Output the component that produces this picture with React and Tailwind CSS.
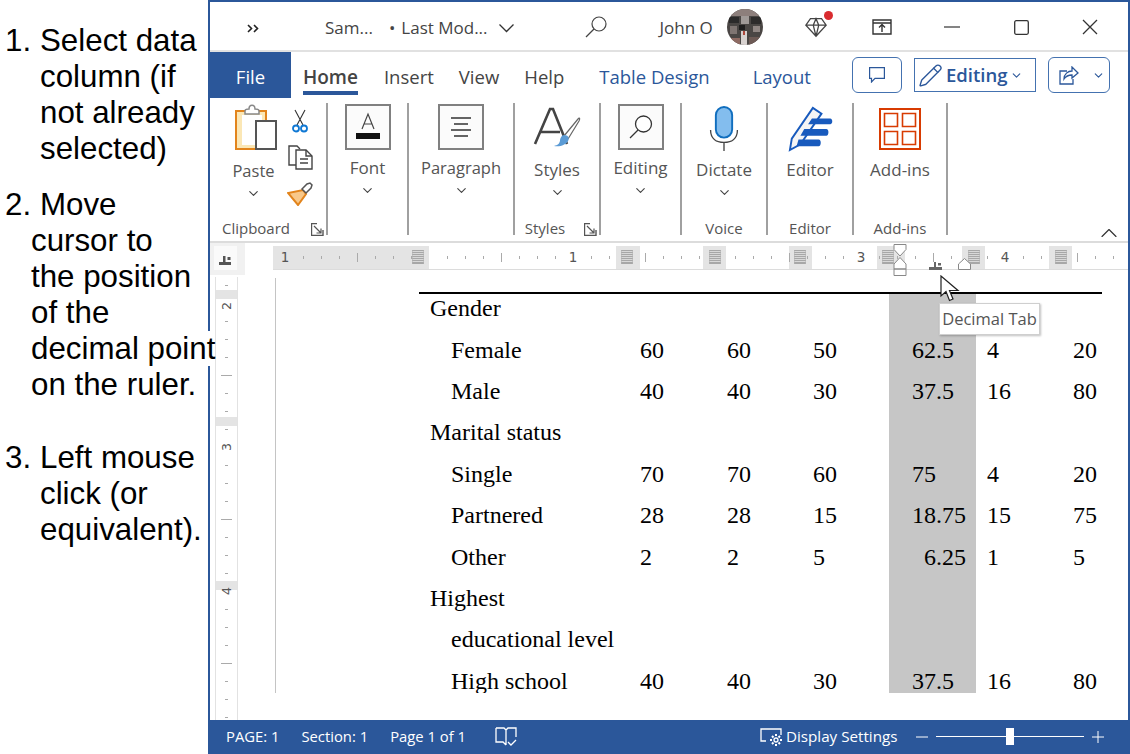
import { ChevronDown, ChevronUp, Pencil } from "lucide-react";

const steps = [
  { n: "1.", lines: ["Select data", "column (if", "not already", "selected)"] },
  { n: "2.", lines: ["Move", "cursor to", "the position", "of the", "decimal point", "on the ruler."] },
  { n: "3.", lines: ["Left mouse", "click (or", "equivalent)."] },
];

const rows = [
  { label: "Gender" },
  { label: "Female", sub: true, v: ["60", "60", "50", "62.5", "4", "20"] },
  { label: "Male", sub: true, v: ["40", "40", "30", "37.5", "16", "80"] },
  { label: "Marital status" },
  { label: "Single", sub: true, v: ["70", "70", "60", "75", "4", "20"] },
  { label: "Partnered", sub: true, v: ["28", "28", "15", "18.75", "15", "75"] },
  { label: "Other", sub: true, v: ["2", "2", "5", "6.25", "1", "5"] },
  { label: "Highest" },
  { label: "educational level", sub: true },
  { label: "High school", sub: true, v: ["40", "40", "30", "37.5", "16", "80"] },
];

function Instructions() {
  return (
    <aside className="relative z-10 w-[208px] shrink-0 pl-[5px] pt-[23px] font-['Liberation_Sans',sans-serif] text-[31.300px] leading-[36px] text-black">
      <div className="flex">
        <span className="w-[35px] shrink-0">1.</span>
        <div>{steps[0].lines.map((l) => <div key={l}>{l}</div>)}</div>
      </div>
      <div className="mt-[20px] flex">
        <span className="w-[26px] shrink-0">2.</span>
        <div className="whitespace-nowrap">
          {steps[1].lines.map((l, i) => (
            <div key={l} className={i === 0 ? "pl-[9px]" : ""}>
              <span className={i === 4 ? "bg-white" : ""}>{l}</span>
            </div>
          ))}
        </div>
      </div>
      <div className="mt-[37px] flex">
        <span className="w-[35px] shrink-0">3.</span>
        <div>{steps[2].lines.map((l) => <div key={l}>{l}</div>)}</div>
      </div>
    </aside>
  );
}

function TitleBar() {
  return (
    <div className="flex h-[50px] shrink-0 items-center border-b-2 border-[#e1e1e1] text-[17px] text-[#444]">
      <svg className="ml-[37px] mt-[4px]" width="12" height="9" viewBox="0 0 12 9" fill="none" stroke="#222" strokeWidth="1.6">
        <path d="M1 1l3.500 3.500L1 8M7 1l3.500 3.500L7 8" />
      </svg>
      <span className="ml-[66px] mt-[4px]">Sam...</span>
      <span className="ml-[16px] mt-[4px]">•</span>
      <span className="ml-[6px] mt-[4px]">Last Mod...</span>
      <svg className="ml-[11px] mt-[4px]" width="15" height="9" viewBox="0 0 15 9" fill="none" stroke="#333" strokeWidth="1.3">
        <path d="M.5.500l7 7 7-7" />
      </svg>
      <svg className="ml-[71px] mt-[2px]" width="22" height="22" viewBox="0 0 22 22" fill="none" stroke="#444" strokeWidth="1.200">
        <circle cx="14" cy="8" r="7" /><path d="M9 13l-8 8" />
      </svg>
      <span className="ml-[53px] mt-[4px]">John O</span>
      <Avatar />
      <div className="relative ml-[41px] mt-[2px]">
        <svg className="block" width="24" height="24" viewBox="0 0 26 24" fill="none" stroke="#444" strokeWidth="1.4">
          <path d="M7 3h12l5 7-11 12L2 10z M2 10h22 M10 10l3 12 3-12 M10 10l3-7 3 7" />
        </svg>
        <span className="absolute right-[-5px] top-[-4px] size-[9px] rounded-full bg-[#d92b2f]" />
      </div>
      <svg className="ml-[44px] mt-[2px]" width="20" height="16" viewBox="0 0 20 16" fill="none" stroke="#333" strokeWidth="1.4">
        <path d="M1 1h18v14H1z M1 4h18" /><path d="M10 13V6M7 8.500l3-3 3 3" />
      </svg>
      <svg className="ml-[52px] mt-[2px]" width="16" height="2" viewBox="0 0 16 2" stroke="#333" strokeWidth="1.2"><path d="M0 1h16" /></svg>
      <svg className="ml-[54px] mt-[2px]" width="15" height="15" viewBox="0 0 15 15" fill="none" stroke="#333" strokeWidth="1.300">
        <rect x=".7" y=".7" width="13.600" height="13.600" rx="1.500" />
      </svg>
      <svg className="ml-[53px] mt-[2px]" width="16" height="16" viewBox="0 0 16 16" fill="none" stroke="#333" strokeWidth="1.300">
        <path d="M1 1l14 14M15 1L1 15" />
      </svg>
    </div>
  );
}

function Avatar() {
  return (
    <svg className="ml-[14px] mt-[2px]" width="36" height="36" viewBox="0 0 36 36">
      <defs><clipPath id="av"><circle cx="18" cy="18" r="18" /></clipPath></defs>
      <g clipPath="url(#av)">
        <rect width="36" height="36" fill="#4a4644" />
        <rect y="0" width="36" height="7" fill="#8d7f7c" />
        <rect x="2" y="8" width="10" height="6" fill="#2b2a2a" />
        <rect x="14" y="7" width="8" height="8" fill="#a09a98" />
        <rect x="24" y="8" width="10" height="7" fill="#2d2b2b" />
        <rect x="3" y="17" width="7" height="8" fill="#7f7572" />
        <rect x="12" y="16" width="6" height="5" fill="#1f1e1e" />
        <rect x="26" y="17" width="7" height="6" fill="#908683" />
        <rect x="14" y="22" width="6" height="14" fill="#d8d2d0" />
        <rect x="16" y="22" width="2" height="4" fill="#b04a3e" />
        <rect x="0" y="29" width="13" height="7" fill="#8e6b63" />
        <rect x="22" y="28" width="14" height="8" fill="#6d5a55" />
      </g>
    </svg>
  );
}

function TabBar() {
  return (
    <div className="flex h-[46px] shrink-0 items-stretch text-[18.500px] text-[#444]">
      <div className="flex w-[81px] items-center justify-center bg-[#2b579a] pt-[3px] text-white">File</div>
      <div className="relative ml-[12px] flex items-center pt-[4px] text-[19px] font-semibold">
        Home
        <span className="absolute bottom-[3px] left-0 right-0 h-[4px] bg-[#2b579a]" />
      </div>
      <div className="ml-[26px] flex items-center pt-[3px]">Insert</div>
      <div className="ml-[25px] flex items-center pt-[3px]">View</div>
      <div className="ml-[25px] flex items-center pt-[3px]">Help</div>
      <div className="ml-[35px] flex items-center pt-[3px] text-[#2b579a]">Table Design</div>
      <div className="ml-[43px] flex items-center pt-[3px] text-[#2b579a]">Layout</div>
      <div className="ml-[41px] mt-[5px] flex h-[36px] w-[50px] items-center justify-center rounded-[6px] border border-[#4472b0]">
        <svg width="16" height="16" viewBox="0 0 16 16" fill="none" stroke="#2b579a" strokeWidth="1.200">
          <path d="M.6.600h14.800v10.800H6L2.500 15v-3.600H.6z" />
        </svg>
      </div>
      <div className="ml-[12px] mt-[6px] flex h-[34px] w-[122px] items-center border border-[#4472b0] pl-[3px] font-semibold text-[#2b579a]">
        <Pencil className="size-[25px]" strokeWidth={1.3} />
        <span className="ml-[3px]">Editing</span>
        <ChevronDown className="ml-[3px] size-[13px]" strokeWidth={2} />
      </div>
      <div className="ml-[12px] mt-[5px] flex h-[36px] w-[62px] items-center rounded-[6px] border border-[#4472b0] pl-[10px] text-[#2b579a]">
        <svg width="20" height="19" viewBox="0 0 20 19" fill="none" stroke="#2b579a" strokeWidth="1.300">
          <path d="M8 5H1v13h13v-5" /><path d="M5 13c0-5 4-8 8-8V1l6 6-6 5V9c-4 0-6 1-8 4z" />
        </svg>
        <ChevronDown className="ml-[13px] size-[13px]" strokeWidth={2} />
      </div>
    </div>
  );
}

function Group({ width, label, dialog, children }) {
  return (
    <div className={`relative flex h-[132px] flex-col border-r-2 border-[#a0a0a0] ${width}`}>
      <div className="min-h-0 flex-1">{children}</div>
      {label && (
        <div className={`flex h-[22px] items-center justify-center whitespace-nowrap pt-[9px] text-[15px] text-[#555] ${dialog ? "pr-[24px]" : ""}`}>{label}</div>
      )}
      {dialog && (
        <svg className="absolute bottom-[-1px] right-[2px]" width="13" height="13" viewBox="0 0 13 13" fill="none" stroke="#555" strokeWidth="1.2">
          <path d="M12 7v5.500H.5V.5H6" strokeWidth="1.4" /><path d="M3 3l7 7M5.500 10H10V5.500" />
        </svg>
      )}
    </div>
  );
}

function Big({ label, chevron = true, icon }) {
  return (
    <div className="flex flex-col items-center text-[17px] leading-[22px] text-[#555]">
      <div className="flex h-[52px] items-center justify-center">{icon}</div>
      <div className="mt-[4px] whitespace-nowrap">{label}</div>
      {chevron && <ChevronDown className="mt-[4px] size-[15px] text-[#444]" strokeWidth={1.8} />}
    </div>
  );
}

function BoxedItem({ label, small, children }) {
  return (
    <div className={`mt-[1px] flex flex-col items-center leading-[22px] text-[#555] ${small ? "text-[16.500px]" : "text-[17px]"}`}>
      <div className="flex h-[46px] w-[46px] items-center justify-center border-[2px] border-[#808080] bg-[#fbfbfb]">{children}</div>
      <div className="mt-[7px]">{label}</div>
      <ChevronDown className="mt-[4px] size-[15px] text-[#444]" strokeWidth={1.8} />
    </div>
  );
}

function Ribbon() {
  return (
    <div className="flex h-[145px] shrink-0 items-start border-b-2 border-[#dcdcdc] pt-[5px]">
      <Group width="w-[118px]" label="Clipboard" dialog>
        <div className="flex">
          <div className="ml-[21px] w-[45px]">
            <svg width="44" height="46" viewBox="0 0 44 46" className="ml-[4px] mt-[1px]">
              <path d="M1 7h30v38H1z" fill="#fbe7b5" stroke="#e2841c" strokeWidth="2" />
              <path d="M7 11h20v30H7z" fill="#fff" />
              <path d="M10 7c0-2 3-2 4-2 0-5 6-5 6 0 1 0 4 0 4 2v3H10z" fill="#fff" stroke="#888" strokeWidth="1.5" />
              <path d="M21 17h20v28H21z" fill="#fff" stroke="#555" strokeWidth="2" />
            </svg>
            <div className="mt-[10px] text-center text-[16.500px] leading-[22px] text-[#555]">Paste</div>
            <ChevronDown className="mx-auto mt-[4px] size-[15px] text-[#444]" strokeWidth={1.8} />
          </div>
          <div className="ml-[11px] flex w-[26px] flex-col items-center">
            <svg className="mt-[6px]" width="16" height="24" viewBox="0 0 16 24" fill="none">
              <path d="M3 1l8 15M13 1L5 16" stroke="#333" strokeWidth="1.100" />
              <circle cx="4" cy="19.500" r="3" stroke="#0f78d4" strokeWidth="1.800" />
              <circle cx="12" cy="19.500" r="3" stroke="#0f78d4" strokeWidth="1.800" />
            </svg>
            <svg className="mt-[12px]" width="25" height="25" viewBox="0 0 25 25" fill="none" stroke="#444" strokeWidth="1.4">
              <path d="M8 20H1V1h8l3 3" /><path d="M8 5h10l6 6v13H8z" fill="#fff" /><path d="M18 5v6h6M12 14h8M12 18h8" />
            </svg>
            <svg className="mt-[11px]" width="26" height="25" viewBox="0 0 26 25" fill="none">
              <path d="M16 9l3 4-8 11L1 12z" fill="#f8c88a" stroke="#e2841c" strokeWidth="2" />
              <path d="M15 8l5-5 3-1 2 2-1 3-5 5z" fill="#fff" stroke="#555" strokeWidth="1.5" />
            </svg>
          </div>
        </div>
      </Group>
      <Group width="w-[81px]">
        <BoxedItem label="Font">
          <svg width="26" height="30" viewBox="0 0 26 30">
            <path d="M7 17L13 2l6 15M9 12h8" fill="none" stroke="#444" strokeWidth="1.2" />
            <rect x="1" y="21" width="24" height="6" fill="#111" />
          </svg>
        </BoxedItem>
      </Group>
      <Group width="w-[106px]">
        <BoxedItem label="Paragraph" small>
          <svg width="24" height="22" viewBox="0 0 24 22" fill="none" stroke="#333" strokeWidth="1.5">
            <path d="M2 2h20M5 8h14M2 14h20M5 20h14" />
          </svg>
        </BoxedItem>
      </Group>
      <Group width="w-[86px]" label="Styles" dialog>
        <Big
          label="Styles"
          icon={
            <svg width="48" height="46" viewBox="0 0 48 46" fill="none">
              <path d="M2 38L17 3h3l14 35M8 26h19" stroke="#444" strokeWidth="2.6" />
              <path d="M31 30L45 13c2-2 2 0 1 2L35 33" fill="#fff" stroke="#666" strokeWidth="1.2" />
              <path d="M31 29c4 0 6 3 4 6-2 4-8 6-14 5 4-1 5-2 6-5 0-3 2-6 4-6z" fill="#5b9bd5" />
            </svg>
          }
        />
      </Group>
      <Group width="w-[81px]">
        <BoxedItem label="Editing">
          <svg width="26" height="26" viewBox="0 0 26 26" fill="none" stroke="#333" strokeWidth="1.300">
            <circle cx="15.500" cy="10" r="8" fill="#fff" /><path d="M10 16l-8 8" />
          </svg>
        </BoxedItem>
      </Group>
      <Group width="w-[86px]" label="Voice">
        <Big
          label="Dictate"
          icon={
            <svg width="30" height="46" viewBox="0 0 30 48" fill="none">
              <rect x="6.500" y="1" width="17" height="32" rx="8.500" fill="#83bdee" stroke="#106ebe" strokeWidth="2" />
              <path d="M1 25c0 9 6 13 14 13s14-4 14-13M15 38v9" stroke="#444" strokeWidth="1.4" />
            </svg>
          }
        />
      </Group>
      <Group width="w-[86px]" label="Editor">
        <Big
          label="Editor"
          chevron={false}
          icon={
            <svg width="48" height="46" viewBox="0 0 48 48">
              <path d="M3 46l2-12L27 2l9 6-22 32z" fill="#f5f5f5" stroke="#185abd" strokeWidth="2" />
              <path d="M26 13h19c3 0 3 6 0 6H22zM18 24h23c3 0 3 7 0 7H14zM12 35h21c3 0 3 7 0 7H10z" fill="#185abd" />
            </svg>
          }
        />
      </Group>
      <Group width="w-[94px]" label="Add-ins">
        <Big
          label="Add-ins"
          chevron={false}
          icon={
            <svg width="42" height="42" viewBox="0 0 42 42" fill="none" stroke="#d83b01">
              <rect x="1" y="1" width="40" height="40" strokeWidth="2" fill="#fff" />
              <path d="M5.500 5.500h13v13h-13zM23.500 5.500h13v13h-13zM5.500 23.500h13v13h-13zM23.500 23.500h13v13h-13z" strokeWidth="1.600" />
            </svg>
          }
        />
      </Group>
      <div className="flex h-[132px] flex-1 items-end justify-end pr-[5px]">
        <ChevronUp className="mb-[-12px] size-[28px] text-[#333]" strokeWidth={1} />
      </div>
    </div>
  );
}

const hGrey = [[0, 156], [343, 24], [430, 23], [516, 23], [604, 28], [689, 23], [776, 23]];
const hNums = [[12, "1"], [300, "1"], [588, "3"], [732, "4"]];
const hGrips = [145, 354, 442, 527, 615, 701, 788];

function Grip({ x, y = 4 }) {
  return (
    <g transform={`translate(${x - 5.5} ${y})`}>
      <rect width="11" height="14" fill="#777" />
      <path d="M0 1.500h11M0 3.500h11M0 5.500h11M0 7.500h11M0 9.500h11M0 11.500h11M1.500 0v14M3.500 0v14M5.500 0v14M7.500 0v14M9.500 0v14" stroke="#d8d8d8" strokeWidth="1" />
    </g>
  );
}

function HRuler() {
  const ticks = [];
  for (let i = 0; 12 + i * 18 < 860; i++) {
    if (i % 8 !== 0) ticks.push({ x: 12.5 + i * 18, long: i % 8 === 4 });
  }
  return (
    <div className="flex h-[32px] shrink-0 items-start">
      <div className="h-[32px] w-[35px] shrink-0 bg-[#f1f1f1] pl-[4px] pt-[3px]">
        <div className="flex h-[24px] w-[23px] items-center justify-center bg-[#fafafa]">
          <svg className="mt-[4px]" width="13" height="11" viewBox="0 0 13 11" fill="#555"><path d="M0 7h12v3H0zM4 1h2.500v6H4zM8.500 2h3v3h-3z" /></svg>
        </div>
      </div>
      <div className="relative ml-[28px] mt-[3px] h-[24px] flex-1 border-b border-[#dcdcdc] bg-white font-['DejaVu_Sans',sans-serif] text-[13.500px] text-[#555]">
        <svg className="absolute inset-0 overflow-hidden" width="855" height="23">
          {hGrey.map(([x, w]) => <rect key={x} x={x} width={w} height="23" fill="#e4e4e4" />)}
          {ticks.map((t) => (
            <line key={t.x} x1={t.x} x2={t.x} y1={t.long ? 7 : 10} y2={t.long ? 16 : 13} stroke="#aaa" />
          ))}
          {hGrips.map((x) => <Grip key={x} x={x} />)}
        </svg>
        {hNums.map(([x, n]) => (
          <span key={x} className="absolute top-0 -translate-x-1/2 leading-[23px]" style={{ left: x }}>{n}</span>
        ))}
        <svg className="absolute left-[620px] top-[-2px]" width="14" height="32" viewBox="0 0 14 32" fill="#fff" stroke="#888" strokeWidth="1">
          <path d="M1 .500h12v5L7 12 1 5.500zM1 20l6-6.500 6 6.500v5H1zM1 25h12v6.500H1z" />
        </svg>
        <svg className="absolute left-[656px] top-[16px]" width="13" height="8" viewBox="0 0 13 8" fill="#666">
          <path d="M0 5h13v3H0zM5 0h2v5H5zM9 1h3v2.500H9z" />
        </svg>
        <svg className="absolute left-[685px] top-[12px]" width="13" height="12" viewBox="0 0 13 12" fill="#fff" stroke="#888" strokeWidth="1">
          <path d="M.5 6l6-5.500 6 5.500v5.500H.5z" />
        </svg>
      </div>
    </div>
  );
}

function VRuler() {
  const ticks = [];
  for (let i = 0; i < 25; i++) {
    if (i % 8 !== 1) ticks.push({ y: 8.5 + i * 18, long: i % 8 === 5 });
  }
  return (
    <div className="relative ml-[5px] mt-[2px] h-[443px] w-[23px] shrink-0 border-x border-[#e2e2e2] bg-white font-['DejaVu_Sans',sans-serif] text-[12.500px] text-[#555]">
      <svg className="absolute left-0 top-0" width="21" height="443">
        <rect width="21" height="9" y="13" fill="#e4e4e4" />
        <rect width="21" height="9" y="140" fill="#e4e4e4" />
        <rect width="21" height="9" y="304" fill="#e4e4e4" />
        {ticks.map((t) => (
          <line key={t.y} x1={t.long ? 5 : 9} x2={t.long ? 16 : 12} y1={t.y} y2={t.y} stroke="#aaa" />
        ))}
      </svg>
      {[[22, "2"], [163, "3"], [307, "4"]].map(([y, n]) => (
        <span key={n} className="absolute left-[7px] -rotate-90 leading-[14px]" style={{ top: y }}>{n}</span>
      ))}
    </div>
  );
}

function Row({ row }) {
  return (
    <div className="grid h-[41.400px] grid-cols-[210px_87px_86px_87px_87px_86px_40px] leading-[29px]">
      <div className={`whitespace-nowrap ${row.sub ? "pl-[32px]" : "pl-[11px]"}`}>{row.label}</div>
      {[0, 1, 2, 3, 4, 5].map((i) => {
        const val = row.v ? row.v[i] : "";
        if (i === 3) {
          return <div key={i} className={`bg-[#c6c6c6] ${val === "6.25" ? "pl-[35px]" : "pl-[23px]"}`}>{val}</div>;
        }
        return <div key={i} className="pl-[11px]">{val}</div>;
      })}
    </div>
  );
}

function Doc() {
  return (
    <div className="relative flex min-h-0 flex-1">
      <VRuler />
      <div className="ml-[37px] mt-[3px] h-[415px] flex-1 border-l border-[#c4c4c4] pl-[143px] pt-[14px] font-['Liberation_Serif',serif] text-[24px] text-black">
        <div className="h-[2px] w-[683px] bg-black" />
        <div className="h-[399px] w-[683px] overflow-hidden pt-[0.300px]">
          {rows.map((r, i) => <Row key={i} row={r} />)}
        </div>
      </div>
      <svg className="absolute left-[730px] top-0" width="20" height="28" viewBox="0 0 20 28" fill="#fff" stroke="#222" strokeWidth="1.2">
        <path d="M1 1v20l5-4.500 3.500 9 3.500-1.500-3.500-8.500H18z" />
      </svg>
      <div className="absolute left-[729px] top-[28px] flex h-[32px] w-[101px] items-center justify-center border border-[#cfcfcf] bg-white text-[16.500px] text-[#555] shadow-[1px_1px_2px_rgba(0,0,0,0.25)]">
        Decimal Tab
      </div>
    </div>
  );
}

function StatusBar() {
  return (
    <div className="flex h-[34px] shrink-0 items-center bg-[#2b579a] pb-[1px] text-[14.800px] text-white">
      <span className="ml-[16px]">PAGE: 1</span>
      <span className="ml-[22px]">Section: 1</span>
      <span className="ml-[22px]">Page 1 of 1</span>
      <svg className="ml-[29px]" width="22" height="20" viewBox="0 0 22 20" fill="none" stroke="#fff" strokeWidth="1.3">
        <path d="M1 1h8l2 2 2-2h8v9M1 1v14h7l3 3M11 3v15M13 15l3 3 5-5" />
      </svg>
      <svg className="ml-[243px]" width="24" height="20" viewBox="0 0 24 20" fill="none" stroke="#fff" strokeWidth="1.3">
        <path d="M6 14H1V2h20v6" /><circle cx="16" cy="13" r="2" /><path d="M16 7v2M16 17v2M10 13h2M20 13h2M12 9l1.500 1.500M20 9l-1.500 1.500M12 17l1.500-1.500M20 17l-1.500-1.500" strokeWidth="2" />
      </svg>
      <span className="ml-[2px] text-[15.200px]">Display Settings</span>
      <svg className="ml-[19px]" width="12" height="2" viewBox="0 0 12 2" stroke="#fff"><path d="M0 1h12" /></svg>
      <div className="relative ml-[8px] h-[1.500px] w-[148px] bg-white">
        <span className="absolute left-[70px] top-[-8px] h-[17px] w-[8px] bg-white" />
      </div>
      <svg className="ml-[8px]" width="12" height="12" viewBox="0 0 12 12" stroke="#fff"><path d="M0 6h12M6 0v12" /></svg>
    </div>
  );
}

export default function App() {
  return (
    <div className="flex h-[754px] w-[1130px] overflow-hidden bg-white font-['Open_Sans',sans-serif]">
      <Instructions />
      <div className="flex h-full w-[922px] flex-col border-x-2 border-t-2 border-[#2b579a] bg-white">
        <TitleBar />
        <TabBar />
        <Ribbon />
        <HRuler />
        <Doc />
        <StatusBar />
      </div>
    </div>
  );
}
